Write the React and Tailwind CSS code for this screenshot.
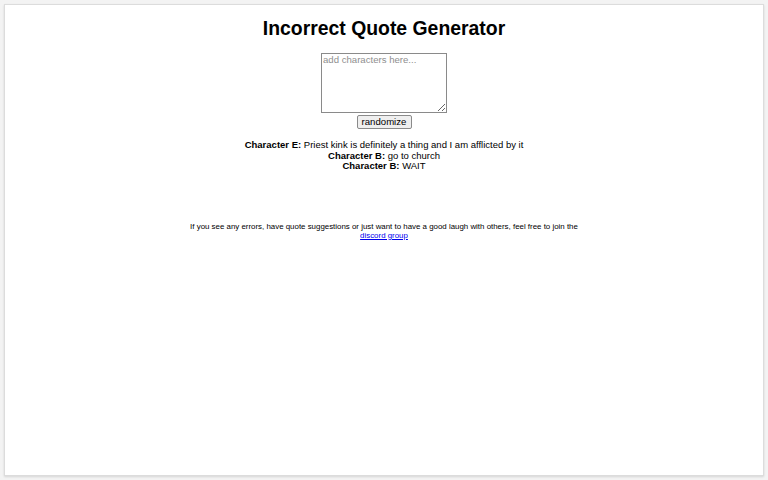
import React from "react";

const quote = [
  { who: "Character E", line: "Priest kink is definitely a thing and I am afflicted by it" },
  { who: "Character B", line: "go to church" },
  { who: "Character B", line: "WAIT" },
];

export default function App() {
  return (
    <div className="min-h-screen bg-[#f3f3f3] p-[4px] font-['Liberation_Sans',Arial,sans-serif] text-black">
      <div className="h-[472px] bg-white border border-[#dcdcdc] shadow-[0_1px_2px_rgba(0,0,0,0.12)] flex flex-col items-center">
        <h1 className="mt-[12px] text-[19.4px] leading-[22px] font-bold">Incorrect Quote Generator</h1>

        <textarea
          placeholder="add characters here..."
          className="mt-[14px] w-[126px] h-[60px] border border-[#8a8a8a] px-[1px] py-0 text-[9.6px] leading-[12px] placeholder:text-[#8f8f8f] resize-y"
        />

        <button className="mt-[2px] h-[14px] w-[55px] bg-[#efefef] border border-[#8a8a8a] rounded-[2px] text-[9.6px] leading-[12px]">
          randomize
        </button>

        <div className="mt-[11px] text-center text-[9.5px] leading-[10.5px]">
          {quote.map((q, i) => (
            <div key={i}>
              <b>{q.who}:</b> {q.line}
            </div>
          ))}
        </div>

        <p className="mt-[50px] text-center text-[7.9px] leading-[9px]">
          If you see any errors, have quote suggestions or just want to have a good laugh with others, feel free to join the
          <br />
          <a href="#" className="text-[#0000ee] underline">discord group</a>
        </p>
      </div>
    </div>
  );
}
